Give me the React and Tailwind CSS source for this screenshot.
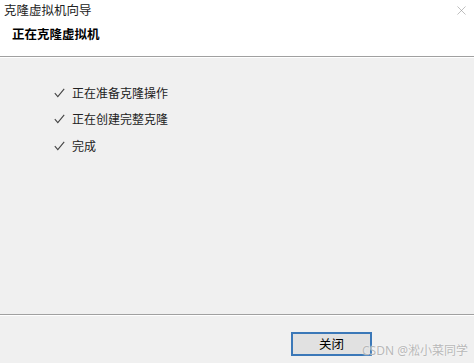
import { X } from 'lucide-react';

const steps = ['正在准备克隆操作', '正在创建完整克隆', '完成'];

function Check() {
  return (
    <svg width="11" height="10" viewBox="0 0 11 10" className="shrink-0">
      <path d="M0.8 5.2 L3.8 8.6 L10.2 0.8" fill="none" stroke="#444" strokeWidth="1.1" />
    </svg>
  );
}

export default function App() {
  return (
    <div
      className="w-[474px] h-[363px] flex flex-col bg-[#f0f0f0] relative overflow-hidden"
      style={{ fontFamily: '"Microsoft YaHei", "Noto Sans CJK SC", sans-serif' }}
    >
      {/* Title + header */}
      <div className="bg-white h-[56px] shrink-0 flex flex-col">
        <div className="h-[20px] flex items-center justify-between pl-[4px] pr-[5px]">
          <span className="text-[12.5px] text-[#222] leading-none">克隆虚拟机向导</span>
          <X size={15} strokeWidth={1} className="text-[#999]" />
        </div>
        <div className="pl-[12px] pt-[8px] text-[12.5px] font-bold text-black leading-none">正在克隆虚拟机</div>
      </div>
      <div className="h-[1px] bg-[#a0a0a0] shrink-0" />
      <div className="h-[1px] bg-white shrink-0" />

      {/* Body */}
      <div className="flex-1 flex flex-col pl-[54px] pt-[28px] gap-[13.5px]">
        {steps.map(s => (
          <div key={s} className="flex items-center gap-[7px] h-[13px]">
            <Check />
            <span
              className="text-[12px] text-[#222] leading-none"
              style={{ fontFamily: '"SimSun", "Noto Sans CJK SC", serif' }}
            >
              {s}
            </span>
          </div>
        ))}
      </div>

      {/* Footer */}
      <div className="h-[1px] bg-[#a0a0a0] shrink-0" />
      <div className="h-[1px] bg-white shrink-0" />
      <div className="h-[47px] shrink-0 flex items-start pl-[291px] pt-[16px]">
        <button className="w-[81px] h-[24px] bg-[#e1e1e1] border-[2px] border-[#3b78b8] text-[12.5px] text-black leading-none flex items-center justify-center">
          关闭
        </button>
      </div>

      <span
        className="absolute left-[362px] top-[345px] text-[12px] text-[#b8b8b8] leading-none whitespace-nowrap [text-shadow:0_0_2px_rgba(255,255,255,0.9)]"
        style={{ fontFamily: '"Noto Sans", "Noto Sans CJK SC", sans-serif' }}
      >
        CSDN @淞小菜同学
      </span>
    </div>
  );
}
